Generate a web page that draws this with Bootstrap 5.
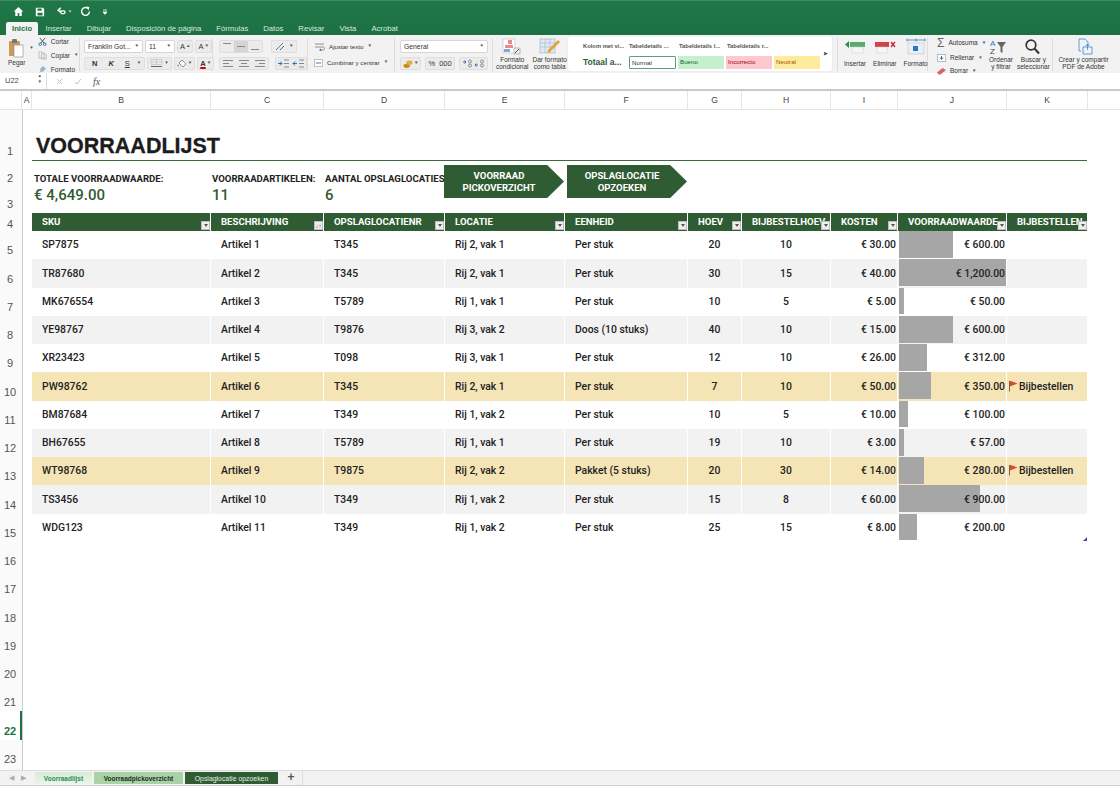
<!DOCTYPE html>
<html lang="nl">
<head>
<meta charset="utf-8">
<title>Voorraadlijst</title>
<link href="https://cdn.jsdelivr.net/npm/bootstrap@5.3.0/dist/css/bootstrap.min.css" rel="stylesheet">
<style>
html,body{margin:0;height:788px;overflow:hidden;background:#fff}
body{font-family:"Liberation Sans",Arial,sans-serif;color:#222;width:1120px}
.xl-title{height:35px;background:linear-gradient(#1f7747,#1d7044);color:#fff;border-top:1px solid #3d8a5f}
.xl-qat{height:21px;padding-left:13px;gap:7px}
.xl-qat svg{display:block}
.xl-tabs{height:13px;padding-left:6px;font-size:7.7px;line-height:13px}
.xl-tab{color:#d6ebde;padding:0 7.5px;white-space:nowrap;text-decoration:none}
.xl-tab-act{background:#f3f3f3;color:#1f7244;font-weight:700;border-radius:2px 2px 0 0;padding:0 6px}
.xl-ribbon{height:38px;background:#f2f2f2;font-size:6.5px;color:#333;line-height:1.15;white-space:nowrap}
.xl-grp{border-right:1px solid #dcdcdc;height:33px;margin-top:3px;flex:none}
.g1{width:80px;padding-left:8px}
.g2{width:133px;padding:2px 0 0 4px}
.g3{width:95px;padding:2px 0 0 6px}
.g4{width:87px;padding-left:6px;font-size:6.2px}
.g5{width:98px;padding:2px 0 0 5px}
.g6{width:75px;padding-left:3px;border-right:0}
.g7{width:264px;border:0;background:#fff;margin-top:2px;height:34px;border-radius:2px;box-shadow:0 0 1px #ccc}
.g8{width:91px;padding-left:6px;margin-left:5px;border-left:1px solid #dcdcdc;gap:7px}
.g9{width:125px;padding-left:9px}
.g10{width:67px;border:0;text-align:center;padding-right:6px}
.xl-col2{gap:4px}
.xl-mini{height:13px;gap:2px}
.xl-list{gap:5px;margin-top:-1px}
.xl-list-w{width:48px;flex:none}
.xl-big{text-align:center;line-height:7px}
.xl-big svg{display:block;margin:0 auto 1px}
.xl-big1 svg{margin-bottom:5px}
.xl-select{background:#fff;border:1px solid #d6d6d6;border-radius:2px;height:13px;padding:0 3px;font-size:6.8px;line-height:11px}
.w58{width:59px}.w30{width:30px}.w87{width:88px}
.xl-btn{background:#ebebeb;border:1px solid #dedede;border-radius:2px;height:13px;gap:3px;padding:0 3px;font-size:7.5px;line-height:11px}
.xl-btn-tight{gap:1px;padding:0 2px}
.xl-btn-on{background:#d5d5d5}
.xl-caret{font-size:4.5px;color:#555;line-height:1}
.xl-fa{text-decoration:underline;text-decoration-color:#c00;text-decoration-thickness:2px;font-weight:700}
.xl-r1{height:18px;font-size:5.8px;padding-top:6px;font-weight:700;color:#555;padding-left:15px}
.xl-r2{height:15px;font-size:6.2px;gap:2px;padding-left:15px}
.xl-st{width:46px;height:13px;line-height:12px;padding-left:2px;flex:none}
.xl-st-n{background:#fff;border:1px solid #5f9e7a;border-radius:1px;width:47px}
.xl-st-g{background:#c6efce;color:#0a6a1f}
.xl-st-b{background:#ffc7ce;color:#9c0006}
.xl-st-y{background:#ffeb9c;color:#9c5700}
.xl-st-t{width:44px;font-size:8.5px;font-weight:700;color:#2f5c32;flex:none;line-height:13px}
.xl-h1{width:46px;flex:none}
.xl-h2{width:50px;flex:none}
.xl-h3{width:48px;flex:none}
.xl-sigma{font-size:12px;line-height:1;color:#666;width:8px}
.xl-formula{height:16px;background:#fff;font-size:7.5px;color:#444}
.xl-name{width:47px;padding-left:5px;border-right:1px solid #ddd;height:16px;line-height:15px}
.xl-fbtns{gap:11px;padding-left:9px;color:#555}
.xl-fx{font-family:"Liberation Serif",serif;font-style:italic;font-size:10px}
.xl-colhead{height:21px;border-top:2px solid #c9c9c9;border-bottom:1px solid #e4e4e4;font-size:8.6px;color:#444;background:#fff;line-height:18px;text-align:center}
.xl-colhead>div{border-right:1px solid #e6e6e6;flex:none}
.xl-corner{width:22px}
.ca{width:10px}.cb{width:179px}.cc{width:113px}.cd{width:121px}.ce{width:120px}.cf{width:123px}.cg{width:54px}.ch{width:89px}.ci{width:67px}.cj{width:109px}.ck{width:81px}
.w-b{width:178px}.w-c{width:112px}.w-d{width:120px}.w-e{width:119px}.w-f{width:122px}.w-g{width:53px}.w-h{width:88px}.w-i{width:66px}.w-j{width:108px}.w-k{width:80px}
.xl-main{height:660px;overflow:hidden}
.xl-rows{width:23px;flex:none;background:#fafafa;border-right:1px solid #ccc;font-size:11px;color:#555;text-align:center}
.xl-rows>div{display:flex;align-items:flex-end;justify-content:center;height:28.25px;padding-bottom:2px;line-height:13px;padding-right:2px}
.xl-rows>div.r1{height:51px;padding-bottom:3px}
.xl-rows>div.r2{height:24px;padding-bottom:0}
.xl-rows>div.r3{height:28px}
.xl-rows>div.r4{height:18px;padding-bottom:0}
.xl-rows>div.sel{color:#1f7244;font-weight:700;box-shadow:inset -2px 0 0 #1f7244;background:#fff}
.xl-sheet{padding-left:9px;flex:1}
.xl-doc-title{height:51px;width:1055px;font-size:21.5px;font-weight:700;color:#1c1c1c;border-bottom:1.5px solid #3d6b3f;padding:24px 0 0 4px;line-height:25px;-webkit-text-stroke:.3px #1c1c1c}
.xl-sum{height:52px;width:1055px}
.xl-sum-c{flex:none;padding-top:12px;font-family:Roboto,sans-serif;font-weight:700;font-size:9.6px;line-height:12px;white-space:nowrap;color:#222;padding-left:2px}
.xl-sum-v{font-size:15px;line-height:17px;color:#2f5c32;font-weight:500;margin-top:2px}
.s1{width:178px}.s2{width:113px}.s3{width:121px}
.xl-arrow{width:120px;height:33px;margin-top:4px;margin-right:3px;flex:none;background:#2f5c32;color:#fff;font-family:Roboto,sans-serif;font-weight:700;font-size:9.6px;line-height:12px;text-align:center;display:flex;align-items:center;justify-content:center;padding-right:10px;clip-path:polygon(0 0,86% 0,100% 50%,86% 100%,0 100%);text-decoration:none}
table.xl-table{width:957px;table-layout:fixed;border-collapse:separate;border-spacing:1px 0;margin:0 0 0 -1px;font-family:Roboto,sans-serif;font-size:10.4px;font-weight:500;color:#222}
.xl-table>thead>tr>th,.xl-table>tbody>tr>td{padding:0 0 0 10px;vertical-align:middle;white-space:nowrap;overflow:hidden;position:relative;box-shadow:none;border:0}
.xl-table>thead>tr>th{background:#2f5c32;color:#fff;height:18px;font-size:9.6px;font-weight:700;line-height:18px}
.xl-table>tbody>tr>td{height:28.25px;background:#fff;color:#222}
.xl-table>tbody>tr.z>td{background:#f2f2f2}
.xl-table>tbody>tr.y>td{background:#f4e4b6}
.xl-table>tbody>tr>td.tc{padding:0;text-align:center}
.xl-table>tbody>tr>td.tr{padding:0 1px 0 0;text-align:right}
.xl-table>tbody>tr>td.tf{padding:0 0 0 1px}
.xl-filter{position:absolute;right:0;bottom:1px;width:9px;height:9px;background:#eee;border:1px solid #bbb;display:flex;align-items:center;justify-content:center}
.xl-filter::after{content:"";border:2.5px solid transparent;border-top:3px solid #555;border-bottom:0}
.xl-sorted{right:0;font-size:6px;line-height:7px;color:#444;font-weight:400}
.xl-sorted::after{display:none}
.xl-bar{position:absolute;left:1px;top:0;bottom:1.5px;background:#a6a6a6}
.xl-barval{position:relative}
.xl-flag{vertical-align:-2px;margin-right:1px}
.xl-handle{position:absolute;right:0;bottom:1px;width:0;height:0;border-left:4px solid transparent;border-bottom:4px solid #3b49b0}
.xl-sheetbar{height:16px;background:#f2f2f2;border-top:1px solid #ddd;font-size:6.9px;line-height:13px;gap:2px;border-bottom:1px solid #cfcfcf}
.xl-nav{width:33px;padding-left:9px;gap:7px;flex:none;color:#aaa;font-size:7px}
.xl-stab{text-align:center;height:12px;margin-top:1px;flex:none;font-weight:700;font-size:6.5px}
.st1{width:57px;background:linear-gradient(#d6ecd6,#eaf5ea);color:#2e8b57}
.st2{width:89px;background:#a9d3a6;color:#1d2d1d}
.st3{width:93px;background:#2f5c32;color:#e4efe4;font-weight:400;font-size:6.9px}
.xl-plus{width:23px;text-align:center;font-size:12px;color:#555;border-right:1px solid #ddd;flex:none;font-weight:700}
</style>
</head>
<body>
<header class="xl-title">
  <div class="xl-qat d-flex align-items-center">
    <svg width="11" height="11" viewBox="0 0 12 12"><path d="M6 1 .8 6h1.700v5h2.600V7.600h1.800V11h2.600V6h1.700z" fill="#fff"/></svg>
    <svg class="ms-1" width="10" height="10" viewBox="0 0 12 12"><path d="M1 1h8.500L11 2.500V11H1z" fill="#fff"/><path d="M3 1.800h5v2.600H3zM3 7h6v3.200H3z" fill="#1f7747"/></svg>
    <svg class="ms-1" width="17" height="11" viewBox="0 0 17 12"><path d="M4.500 2 1.500 4.500l3 2.500V5.300h3.200c1.800 0 2 3-.2 3H4.500" fill="none" stroke="#fff" stroke-width="1.500"/><path d="M13 5h3l-1.500 2z" fill="#d9eee2"/></svg>
    <svg width="11" height="11" viewBox="0 0 12 12"><path d="M9.500 3.400A4.300 4.300 0 1 0 10.300 6" fill="none" stroke="#fff" stroke-width="1.500"/><path d="M6.500 .5l3.600.6-.6 3.600z" fill="#fff"/></svg>
    <svg class="ms-1" width="6" height="8" viewBox="0 0 6 8"><path d="M1 2h4M1 4h4l-2 2.400z" stroke="#fff" stroke-width=".8" fill="#fff"/></svg>
  </div>
  <nav class="xl-tabs d-flex">
    <a class="xl-tab xl-tab-act" href="#">Inicio</a>
    <a class="xl-tab" href="#">Insertar</a>
    <a class="xl-tab" href="#">Dibujar</a>
    <a class="xl-tab" href="#">Disposición de página</a>
    <a class="xl-tab" href="#">Fórmulas</a>
    <a class="xl-tab" href="#">Datos</a>
    <a class="xl-tab" href="#">Revisar</a>
    <a class="xl-tab" href="#">Vista</a>
    <a class="xl-tab" href="#">Acrobat</a>
  </nav>
</header>

<section class="xl-ribbon d-flex">
  <div class="xl-grp g1 d-flex">
    <div class="xl-big me-1">
      <svg width="17" height="20" viewBox="0 0 17 20"><rect x="1" y="3" width="11" height="15" fill="#c79a55" rx="1"/><rect x="4" y="1" width="5" height="4" fill="#777" rx="1"/><rect x="6" y="7" width="9" height="12" fill="#fff" stroke="#888" stroke-width=".6"/></svg>
      <span>Pegar</span>
    </div>
    <span class="xl-caret mt-2 me-1">▼</span>
    <div class="d-flex flex-column xl-list">
      <div class="d-flex align-items-center gap-1"><svg width="9" height="9" viewBox="0 0 10 10"><path d="M2 1l5 6M8 1 3 7" stroke="#444" stroke-width="1"/><circle cx="2.500" cy="8" r="1.500" fill="none" stroke="#2a6fb0"/><circle cx="7.500" cy="8" r="1.500" fill="none" stroke="#2a6fb0"/></svg>Cortar</div>
      <div class="d-flex align-items-center gap-1"><svg width="9" height="9" viewBox="0 0 10 10"><path d="M1 1h4l2 2v5H1zM4 3h4l1 1v5H4z" fill="#eee" stroke="#aaa" stroke-width=".7"/></svg>Copiar <span class="xl-caret">▼</span></div>
      <div class="d-flex align-items-center gap-1"><svg width="9" height="9" viewBox="0 0 10 10"><path d="M5 1l4 3-4 4-3-3z" fill="#9bb4d0"/><path d="M1 9l2-3 1 1z" fill="#c79a55"/></svg>Formato</div>
    </div>
  </div>

  <div class="xl-grp g2 d-flex flex-column xl-col2">
    <div class="xl-mini d-flex">
      <div class="xl-select w58 d-flex justify-content-between align-items-center"><span>Franklin Got...</span><span class="xl-caret">▼</span></div>
      <div class="xl-select w30 d-flex justify-content-between align-items-center"><span>11</span><span class="xl-caret">▼</span></div>
      <div class="xl-btn xl-btn-tight d-flex align-items-center"><span>A</span><span class="xl-caret">▲</span></div>
      <div class="xl-btn xl-btn-tight d-flex align-items-center"><span>A</span><span class="xl-caret">▼</span></div>
    </div>
    <div class="xl-mini d-flex">
      <div class="xl-btn d-flex align-items-center fw-bold"><span class="px-1">N</span><span class="px-1 fst-italic">K</span><span class="px-1 text-decoration-underline fw-normal">S</span><span class="xl-caret">▼</span></div>
      <div class="xl-btn xl-btn-tight d-flex align-items-center"><svg width="13" height="9" viewBox="0 0 13 9"><path d="M1 .5h11v5H1zM6.500.5v5M1 3h11" fill="none" stroke="#bbb" stroke-width=".6"/><path d="M1 7.500h11" stroke="#666" stroke-width="1"/></svg><span class="xl-caret">▼</span></div>
      <div class="xl-btn xl-btn-tight d-flex align-items-center"><svg width="10" height="10" viewBox="0 0 10 10"><path d="M5 1l4 4-3 3-4-4z" fill="#fff" stroke="#666" stroke-width=".7"/><path d="M1 5c-1 2 0 3 1 2z" fill="#1f97c9"/></svg><span class="xl-caret">▼</span></div>
      <div class="xl-btn xl-btn-tight d-flex align-items-center"><span class="xl-fa">A</span><span class="xl-caret">▼</span></div>
    </div>
  </div>

  <div class="xl-grp g3 d-flex flex-column xl-col2">
    <div class="xl-mini d-flex gap-2">
      <div class="xl-btn d-flex align-items-center gap-0 p-0">
        <svg width="14" height="11" viewBox="0 0 14 11"><path d="M3 2.500h8" stroke="#888"/></svg><svg class="xl-btn-on" width="14" height="11" viewBox="0 0 14 11"><path d="M3 5.500h8" stroke="#888"/></svg><svg width="14" height="11" viewBox="0 0 14 11"><path d="M3 8.500h8" stroke="#888"/></svg>
      </div>
      <div class="xl-btn d-flex align-items-center"><svg width="11" height="10" viewBox="0 0 11 10"><path d="M1 8l7-7" stroke="#777"/><path d="M5 8l4-4" stroke="#2a6fb0"/></svg><span class="xl-caret">▼</span></div>
    </div>
    <div class="xl-mini d-flex">
      <div class="xl-btn d-flex align-items-center gap-0 p-0 me-1">
        <svg width="16" height="11" viewBox="0 0 16 11"><path d="M3 2.500h10M3 5.500h6M3 8.500h10" stroke="#888"/></svg><svg width="16" height="11" viewBox="0 0 16 11"><path d="M3 2.500h10M5 5.500h6M3 8.500h10" stroke="#888"/></svg><svg width="16" height="11" viewBox="0 0 16 11"><path d="M3 2.500h10M7 5.500h6M3 8.500h10" stroke="#888"/></svg>
      </div>
      <div class="xl-btn d-flex align-items-center gap-0 p-0">
        <svg width="15" height="11" viewBox="0 0 15 11"><path d="M2 5.500h4M4 3.500l2 2-2 2" stroke="#2a6fb0" fill="none"/><path d="M8 2h5M8 5.500h5M8 9h5" stroke="#888"/></svg><svg width="15" height="11" viewBox="0 0 15 11"><path d="M6 5.500H2M4 3.500l-2 2 2 2" stroke="#2a6fb0" fill="none"/><path d="M8 2h5M8 5.500h5M8 9h5" stroke="#888"/></svg>
      </div>
    </div>
  </div>

  <div class="xl-grp g4 d-flex flex-column justify-content-center gap-2">
    <div class="d-flex align-items-center gap-1"><svg width="11" height="8" viewBox="0 0 11 8"><path d="M1 1h9M1 4h8c2 0 2 3 0 3H6" fill="none" stroke="#777" stroke-width=".8"/><path d="M7 5.400v3L5 7z" fill="#2a6fb0"/></svg>Ajustar texto <span class="xl-caret">▼</span></div>
    <div class="d-flex align-items-center gap-1"><svg width="9" height="8" viewBox="0 0 10 9"><rect x=".5" y=".5" width="9" height="8" fill="#fff" stroke="#bbb"/><path d="M2 4.500h6" stroke="#2a6fb0"/></svg>Combinar y centrar <span class="xl-caret">▼</span></div>
  </div>

  <div class="xl-grp g5 d-flex flex-column xl-col2">
    <div class="xl-select w87 d-flex justify-content-between align-items-center"><span>General</span><span class="xl-caret">▼</span></div>
    <div class="xl-mini d-flex gap-1">
      <div class="xl-btn xl-btn-tight d-flex align-items-center"><svg width="10" height="10" viewBox="0 0 11 10"><ellipse cx="4" cy="7" rx="3.500" ry="2.400" fill="#c98a1c"/><ellipse cx="7" cy="3.500" rx="3.500" ry="2.400" fill="#e0ae3f"/></svg><span class="xl-caret">▼</span></div>
      <div class="xl-btn xl-btn-tight d-flex align-items-center gap-1"><span>%</span><span>000</span></div>
      <div class="xl-btn xl-btn-tight d-flex align-items-center"><svg width="11" height="9" viewBox="0 0 11 9"><path d="M1 3h3M2.500 1.500 4 3 2.500 4.500" fill="none" stroke="#2a6fb0"/><circle cx="8" cy="2.500" r="1.500" fill="none" stroke="#555" stroke-width=".6"/><circle cx="8" cy="6.500" r="1.500" fill="none" stroke="#555" stroke-width=".6"/></svg><svg width="11" height="9" viewBox="0 0 11 9"><path d="M4 6H1M2.500 4.500 1 6l1.500 1.500" fill="none" stroke="#2a6fb0"/><circle cx="8" cy="2.500" r="1.500" fill="none" stroke="#555" stroke-width=".6"/><circle cx="8" cy="6.500" r="1.500" fill="none" stroke="#555" stroke-width=".6"/></svg></div>
    </div>
  </div>

  <div class="xl-grp g6 d-flex gap-1">
    <div class="xl-big">
      <svg width="22" height="17" viewBox="0 0 22 17"><rect x="2" y="1" width="12" height="14" fill="#fff" stroke="#bbb" stroke-width=".6"/><path d="M7 2h4v4H7zM4 7h8v3H4z" fill="#e98b8b"/><path d="M3 11h6v3H3z" fill="#7ea7d6"/><rect x="13" y="10" width="6" height="6" fill="#eee" stroke="#999" stroke-width=".6"/><path d="M14 15l4-4" stroke="#555"/></svg>
      Formato<br>condicional
    </div>
    <div class="xl-big">
      <svg width="26" height="17" viewBox="0 0 26 17"><rect x="3" y="1" width="15" height="14" fill="#dfeaf5" stroke="#9ab" stroke-width=".6"/><path d="M3 5h15M3 9h15M8 1v14M13 1v14" stroke="#9ab" stroke-width=".5"/><path d="M21 2 11 12l-1 3 3-1L23 4z" fill="#e3a23b"/></svg>
      Dar formato<br>como tabla
    </div>
  </div>

  <div class="xl-grp g7 d-flex">
    <div class="flex-grow-1">
      <div class="xl-r1 d-flex">
        <span class="xl-h1">Kolom met vi...</span><span class="xl-h2">Tabeldetails ...</span><span class="xl-h3">Tabeldetails l...</span><span class="xl-h1">Tabeldetails r...</span>
      </div>
      <div class="xl-r2 d-flex align-items-center">
        <span class="xl-st-t">Totaal a...</span><span class="xl-st xl-st-n">Normal</span><span class="xl-st xl-st-g">Bueno</span><span class="xl-st xl-st-b">Incorrecto</span><span class="xl-st xl-st-y">Neutral</span>
      </div>
    </div>
    <div class="d-flex align-items-center pe-1"><span class="xl-caret">▶</span></div>
  </div>

  <div class="xl-grp g8 d-flex">
    <div class="xl-big xl-big1">
      <svg width="22" height="17" viewBox="0 0 22 17"><rect x="6" y="4" width="15" height="5" fill="#5bab6b"/><rect x="8" y="9" width="11" height="6" fill="#f6f6f6" stroke="#ccc" stroke-width=".5"/><path d="M1 6.500 5 3v7z" fill="#2f8a45"/></svg>
      Insertar
    </div>
    <div class="xl-big xl-big1">
      <svg width="23" height="17" viewBox="0 0 23 17"><rect x="2" y="4" width="14" height="5" fill="#d3414b"/><rect x="4" y="9" width="10" height="6" fill="#f6f6f6" stroke="#ccc" stroke-width=".5"/><path d="M18 4l4 5M22 4l-4 5" stroke="#c8242f" stroke-width="1.300"/></svg>
      Eliminar
    </div>
    <div class="xl-big xl-big1">
      <svg width="23" height="17" viewBox="0 0 23 17"><path d="M3 2h18M3 .5v3M21 .5v3M12 .5v3" stroke="#2a6fb0" stroke-width=".7"/><rect x="4" y="5" width="16" height="11" fill="#e8f0f8" stroke="#bbb" stroke-width=".5"/><rect x="9" y="8" width="5" height="5" fill="#2a77c8"/></svg>
      Formato
    </div>
  </div>

  <div class="xl-grp g9 d-flex gap-1">
    <div class="d-flex flex-column xl-list xl-list-w">
      <div class="d-flex align-items-center gap-1"><span class="xl-sigma">Σ</span>Autosuma <span class="xl-caret">▼</span></div>
      <div class="d-flex align-items-center gap-1"><svg width="9" height="8" viewBox="0 0 9 8"><rect x=".5" y=".5" width="8" height="7" fill="#fff" stroke="#bbb"/><path d="M4.500 2v3M3 3.500l1.500 2 1.500-2" stroke="#2a6fb0" fill="none"/></svg>Rellenar <span class="xl-caret">▼</span></div>
      <div class="d-flex align-items-center gap-1"><svg width="9" height="8" viewBox="0 0 9 8"><path d="M0 5.500 5.500 1 9 3 3.500 7.500H1.500z" fill="#d9616f"/></svg>Borrar <span class="xl-caret">▼</span></div>
    </div>
    <div class="xl-big">
      <svg width="24" height="17" viewBox="0 0 24 17"><text x="1" y="8" font-size="8" fill="#2a77c8" font-family="Liberation Sans">A</text><text x="1" y="16" font-size="8" fill="#444" font-family="Liberation Sans">Z</text><path d="M8 4h9l-3.500 5v6l-2-1V9z" fill="#666"/></svg>
      Ordenar<br>y filtrar
    </div>
    <div class="xl-big">
      <svg width="24" height="17" viewBox="0 0 24 17"><circle cx="10" cy="7" r="4.800" fill="none" stroke="#333" stroke-width="1.700"/><path d="M13.500 10.500 18 15.500" stroke="#333" stroke-width="2"/></svg>
      Buscar y<br>seleccionar
    </div>
  </div>

  <div class="xl-grp g10 xl-big">
    <svg width="22" height="17" viewBox="0 0 22 17"><path d="M6 1h6l3 3v4M6 1v12h2" fill="none" stroke="#3b8bd1" stroke-width=".8"/><path d="M10 9h9v7h-9zM14.500 12V6M12.500 8l2-2 2 2" fill="none" stroke="#3b8bd1" stroke-width=".8"/></svg>
    Crear y compartir<br>PDF de Adobe
  </div>
</section>

<div class="xl-formula d-flex align-items-center">
  <div class="xl-name d-flex justify-content-between pe-1"><span>U22</span><span class="xl-caret lh-sm">▲<br>▼</span></div>
  <div class="d-flex align-items-center xl-fbtns">
    <svg width="7" height="7" viewBox="0 0 7 7"><path d="M1 1l5 5M6 1 1 6" stroke="#c4c4c4"/></svg>
    <svg width="8" height="7" viewBox="0 0 8 7"><path d="M1 4l2 2 4-5" stroke="#c4c4c4" fill="none"/></svg>
    <span class="xl-fx">fx</span>
  </div>
</div>

<div class="xl-colhead d-flex">
  <div class="xl-corner"></div>
  <div class="ca">A</div><div class="cb">B</div><div class="cc">C</div><div class="cd">D</div><div class="ce">E</div><div class="cf">F</div><div class="cg">G</div><div class="ch">H</div><div class="ci">I</div><div class="cj">J</div><div class="ck">K</div>
</div>

<main class="xl-main d-flex">
  <div class="xl-rows">
    <div class="r1">1</div><div class="r2">2</div><div class="r3">3</div><div class="r4">4</div>
    <div>5</div><div>6</div><div>7</div><div>8</div><div>9</div><div>10</div><div>11</div><div>12</div><div>13</div><div>14</div><div>15</div><div>16</div><div>17</div><div>18</div><div>19</div><div>20</div><div>21</div><div class="sel">22</div><div>23</div>
  </div>
  <div class="xl-sheet">
    <h1 class="xl-doc-title m-0">VOORRAADLIJST</h1>
    <div class="xl-sum d-flex">
      <div class="xl-sum-c s1">TOTALE VOORRAADWAARDE:<div class="xl-sum-v">€ 4,649.00</div></div>
      <div class="xl-sum-c s2">VOORRAADARTIKELEN:<div class="xl-sum-v">11</div></div>
      <div class="xl-sum-c s3">AANTAL OPSLAGLOCATIES:<div class="xl-sum-v">6</div></div>
      <a class="xl-arrow" href="#">VOORRAAD<br>PICKOVERZICHT</a>
      <a class="xl-arrow" href="#">OPSLAGLOCATIE<br>OPZOEKEN</a>
    </div>
    <table class="table table-borderless xl-table">
      <colgroup><col class="w-b"><col class="w-c"><col class="w-d"><col class="w-e"><col class="w-f"><col class="w-g"><col class="w-h"><col class="w-i"><col class="w-j"><col class="w-k"></colgroup>
      <thead><tr>
        <th>SKU<span class="xl-filter"></span></th>
        <th>BESCHRIJVING<span class="xl-filter xl-sorted">↓↑</span></th>
        <th>OPSLAGLOCATIENR<span class="xl-filter"></span></th>
        <th>LOCATIE<span class="xl-filter"></span></th>
        <th>EENHEID<span class="xl-filter"></span></th>
        <th>HOEV<span class="xl-filter"></span></th>
        <th>BIJBESTELHOEV<span class="xl-filter"></span></th>
        <th>KOSTEN<span class="xl-filter"></span></th>
        <th>VOORRAADWAARDE<span class="xl-filter"></span></th>
        <th>BIJBESTELLEN<span class="xl-filter"></span></th>
      </tr></thead>
      <tbody>
        <tr><td>SP7875</td><td>Artikel 1</td><td>T345</td><td>Rij 2, vak 1</td><td>Per stuk</td><td class="tc">20</td><td class="tc">10</td><td class="tr">€ 30.00</td><td class="tr"><span class="xl-bar" style="width:50%"></span><span class="xl-barval">€ 600.00</span></td><td></td></tr>
        <tr class="z"><td>TR87680</td><td>Artikel 2</td><td>T345</td><td>Rij 2, vak 1</td><td>Per stuk</td><td class="tc">30</td><td class="tc">15</td><td class="tr">€ 40.00</td><td class="tr"><span class="xl-bar" style="width:100%"></span><span class="xl-barval">€ 1,200.00</span></td><td></td></tr>
        <tr><td>MK676554</td><td>Artikel 3</td><td>T5789</td><td>Rij 1, vak 1</td><td>Per stuk</td><td class="tc">10</td><td class="tc">5</td><td class="tr">€ 5.00</td><td class="tr"><span class="xl-bar" style="width:4.2%"></span><span class="xl-barval">€ 50.00</span></td><td></td></tr>
        <tr class="z"><td>YE98767</td><td>Artikel 4</td><td>T9876</td><td>Rij 3, vak 2</td><td>Doos (10 stuks)</td><td class="tc">40</td><td class="tc">10</td><td class="tr">€ 15.00</td><td class="tr"><span class="xl-bar" style="width:50%"></span><span class="xl-barval">€ 600.00</span></td><td></td></tr>
        <tr><td>XR23423</td><td>Artikel 5</td><td>T098</td><td>Rij 3, vak 1</td><td>Per stuk</td><td class="tc">12</td><td class="tc">10</td><td class="tr">€ 26.00</td><td class="tr"><span class="xl-bar" style="width:26%"></span><span class="xl-barval">€ 312.00</span></td><td></td></tr>
        <tr class="y"><td>PW98762</td><td>Artikel 6</td><td>T345</td><td>Rij 2, vak 1</td><td>Per stuk</td><td class="tc">7</td><td class="tc">10</td><td class="tr">€ 50.00</td><td class="tr"><span class="xl-bar" style="width:29.2%"></span><span class="xl-barval">€ 350.00</span></td><td class="tf"><svg class="xl-flag" width="10" height="12" viewBox="0 0 10 12"><path d="M1.500 1v10.500" stroke="#7d6a3a"/><path d="M2 .8 9.500 3.500 2 6.500z" fill="#d8483a"/></svg>Bijbestellen</td></tr>
        <tr><td>BM87684</td><td>Artikel 7</td><td>T349</td><td>Rij 1, vak 2</td><td>Per stuk</td><td class="tc">10</td><td class="tc">5</td><td class="tr">€ 10.00</td><td class="tr"><span class="xl-bar" style="width:8.3%"></span><span class="xl-barval">€ 100.00</span></td><td></td></tr>
        <tr class="z"><td>BH67655</td><td>Artikel 8</td><td>T5789</td><td>Rij 1, vak 1</td><td>Per stuk</td><td class="tc">19</td><td class="tc">10</td><td class="tr">€ 3.00</td><td class="tr"><span class="xl-bar" style="width:4.8%"></span><span class="xl-barval">€ 57.00</span></td><td></td></tr>
        <tr class="y"><td>WT98768</td><td>Artikel 9</td><td>T9875</td><td>Rij 2, vak 2</td><td>Pakket (5 stuks)</td><td class="tc">20</td><td class="tc">30</td><td class="tr">€ 14.00</td><td class="tr"><span class="xl-bar" style="width:23.3%"></span><span class="xl-barval">€ 280.00</span></td><td class="tf"><svg class="xl-flag" width="10" height="12" viewBox="0 0 10 12"><path d="M1.500 1v10.500" stroke="#7d6a3a"/><path d="M2 .8 9.500 3.500 2 6.500z" fill="#d8483a"/></svg>Bijbestellen</td></tr>
        <tr class="z"><td>TS3456</td><td>Artikel 10</td><td>T349</td><td>Rij 1, vak 2</td><td>Per stuk</td><td class="tc">15</td><td class="tc">8</td><td class="tr">€ 60.00</td><td class="tr"><span class="xl-bar" style="width:75%"></span><span class="xl-barval">€ 900.00</span></td><td></td></tr>
        <tr><td>WDG123</td><td>Artikel 11</td><td>T349</td><td>Rij 1, vak 2</td><td>Per stuk</td><td class="tc">25</td><td class="tc">15</td><td class="tr">€ 8.00</td><td class="tr"><span class="xl-bar" style="width:16.7%"></span><span class="xl-barval">€ 200.00</span></td><td><span class="xl-handle"></span></td></tr>
      </tbody>
    </table>
  </div>
</main>

<footer class="xl-sheetbar d-flex">
  <div class="xl-nav d-flex"><span>◀</span><span>▶</span></div>
  <div class="xl-stab st1">Voorraadlijst</div>
  <div class="xl-stab st2">Voorraadpickoverzicht</div>
  <div class="xl-stab st3">Opslaglocatie opzoeken</div>
  <div class="xl-plus">+</div>
</footer>
<script src="https://cdn.jsdelivr.net/npm/bootstrap@5.3.0/dist/js/bootstrap.bundle.min.js"></script>
</body>
</html>
